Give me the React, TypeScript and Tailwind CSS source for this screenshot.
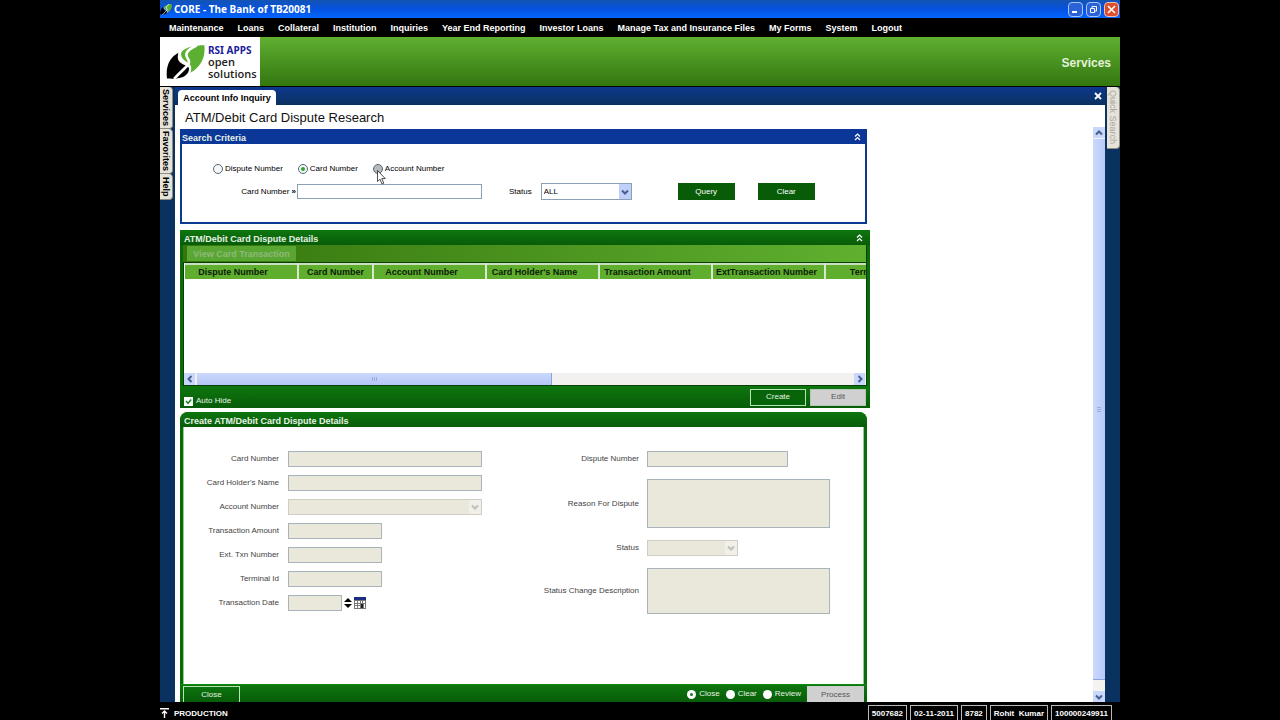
import type { ReactNode } from "react";

const menuItems = [
    "Maintenance",
    "Loans",
    "Collateral",
    "Institution",
    "Inquiries",
    "Year End Reporting",
    "Investor Loans",
    "Manage Tax and Insurance Files",
    "My Forms",
    "System",
    "Logout",
];

const columns = [
    { name: "Dispute Number", className: "w-[113px] pr-4" },
    { name: "Card Number", className: "w-[75px]" },
    { name: "Account Number", className: "w-[113px] pr-4" },
    { name: "Card Holder's Name", className: "w-[113px] pr-4" },
    { name: "Transaction Amount", className: "w-[113px] pr-4" },
    { name: "ExtTransaction Number", className: "w-[113px] pr-1" },
    { name: "Terminal Id", className: "w-[113px] pr-4" },
];

const statusCells = ["5007682", "02-11-2011", "8782", "Rohit  Kumar", "100000249911"];

function LogoMark({ className }: { className: string }) {
    return <svg viewBox="0 0 116 100" className={className} aria-hidden="true">
        <path d="M46 20C58 6 85 0 114 0C118 32 106 64 72 82C78 68 76 58 62 50C48 42 42 32 46 20Z" fill="#5cb031" />
        <path d="M38 22C12 36 -2 62 3 99C34 101 62 98 70 72C68 62 60 62 50 57C36 50 31 38 38 22Z" fill="#000" />
        <path d="M92 0C62 14 54 26 66 42C76 56 54 68 24 100" fill="none" stroke="#fff" strokeWidth="8" />
        <path d="M40 22C34 42 46 50 58 55C70 60 74 64 70 80" fill="none" stroke="#fff" strokeWidth="6" />
    </svg>
}

function Chevron({ className }: { className: string }) {
    return <svg viewBox="0 0 8 8" className={className} fill="none" stroke="currentColor" strokeWidth="2" aria-hidden="true">
        <path d="M1 2.5L4 5.5L7 2.5" />
    </svg>
}

function CollapseIcon() {
    return <svg viewBox="0 0 7 8" className="h-2 w-[7px]" fill="none" stroke="#fff" strokeWidth="1.2" aria-hidden="true">
        <path d="M1 3.5L3.5 1L6 3.5M1 7L3.5 4.5L6 7" />
    </svg>
}

function SideTab({ children, className }: { children: ReactNode, className: string }) {
    return <button className={`w-full flex items-center justify-center rounded-r-sm border-b border-r border-[#8e8c80] bg-[#e6e4da] text-[9px] [writing-mode:vertical-rl] ${className}`}>
        {children}
    </button>
}

function PanelHeader({ title, className, collapsible }: { title: string, className: string, collapsible?: boolean }) {
    return <div className={`flex h-[15px] shrink-0 items-center justify-between pt-0.5 text-[9px] font-bold text-[#e6f2e6] ${className}`}>
        <h2>{title}</h2>
        {collapsible && <button aria-label="Collapse" className="pb-0.5"><CollapseIcon /></button>}
    </div>
}

function SearchRadio({ label, checked, hovered }: { label: string, checked?: boolean, hovered?: boolean }) {
    return <label className="relative flex items-center gap-[2px]">
        <input
            type="radio"
            name="searchBy"
            defaultChecked={checked}
            className={`peer size-[10px] appearance-none rounded-full border border-[#4f6a80] ${hovered ? "bg-[#b9b9b9]" : "bg-[#f6f6f4]"}`}
        />
        <span className="pointer-events-none absolute left-[3px] hidden size-1 rounded-full bg-[#2ea52e] peer-checked:block" />
        {label}
        {hovered && (
            <svg viewBox="0 0 9 15" className="pointer-events-none absolute left-1 top-1.5 h-[15px] w-[9px]" aria-hidden="true">
                <path d="M.5 .5V11.5L3 9.2L5 14L6.8 13.2L4.8 8.6H8.3Z" fill="#fff" stroke="#222" strokeWidth=".8" />
            </svg>
        )}
    </label>
}

function AfterRadio({ label, checked }: { label: string, checked?: boolean }) {
    return <label className="relative flex items-center gap-[3px]">
        <input type="radio" name="afterProcess" defaultChecked={checked} className="peer size-[9px] appearance-none rounded-full bg-white" />
        <span className="pointer-events-none absolute left-[3px] hidden size-[3px] rounded-full bg-[#1d7a1d] peer-checked:block" />
        {label}
    </label>
}

function Field({ id, label, children }: { id: string, label: string, children: ReactNode }) {
    return <>
        <label htmlFor={id} className="text-right">{label}</label>
        <div className="flex items-center">{children}</div>
    </>
}

function TextField({ id, label, className }: { id: string, label: string, className: string }) {
    return <Field id={id} label={label}>
        <input id={id} disabled className={`h-4 border border-[#a9b3ba] bg-[#eae7db] ${className}`} />
    </Field>
}

function SelectField({ id, label, className }: { id: string, label: string, className: string }) {
    return <Field id={id} label={label}>
        <div className={`relative ${className}`}>
            <select id={id} disabled className="block h-4 w-full appearance-none border border-[#d0cec4] bg-[#eae7db] opacity-100" />
            <span className="pointer-events-none absolute inset-y-px right-px flex w-3 items-center justify-center bg-[#f0efea]">
                <Chevron className="size-2 text-[#c2c0b6]" />
            </span>
        </div>
    </Field>
}

function AreaField({ id, label, className }: { id: string, label: string, className: string }) {
    return <Field id={id} label={label}>
        <textarea id={id} disabled className={`block w-[183px] resize-none border border-[#a9b3ba] bg-[#eae7db] ${className}`} />
    </Field>
}

function SearchPanel() {
    return <section className="border-2 border-t-0 border-[#0c3990] bg-white">
        <PanelHeader title="Search Criteria" className="bg-[#0b3799] pr-1" collapsible />
        <div className="h-[78px] pt-5">
            <div className="ml-[31px] flex h-[10px] gap-[15px]">
                <SearchRadio label="Dispute Number" />
                <SearchRadio label="Card Number" checked />
                <SearchRadio label="Account Number" hovered />
            </div>
            <div className="mt-[9px] flex items-center">
                <label htmlFor="cardNumber" className="w-[115px] pr-px text-right">Card Number <b>»</b></label>
                <input id="cardNumber" className="h-[15px] w-[185px] border border-[#8aa0b4] bg-white px-1" />
                <label htmlFor="status" className="ml-[27px]">Status</label>
                <div className="relative ml-[9px] w-[91px]">
                    <select id="status" className="block h-[17px] w-full appearance-none border border-[#8aa0b4] bg-white pl-0.5">
                        <option>ALL</option>
                    </select>
                    <span className="pointer-events-none absolute inset-y-px right-px flex w-3 items-center justify-center bg-[#c0d0f8]">
                        <Chevron className="size-2 text-[#44608f]" />
                    </span>
                </div>
                <button className="ml-[46px] h-[17px] w-[57px] bg-[#085c08] text-white">Query</button>
                <button className="ml-[23px] h-[17px] w-[57px] bg-[#085c08] text-white">Clear</button>
            </div>
        </div>
    </section>
}

function DetailsPanel() {
    return <section className="-mr-[3px] mt-1.5 bg-[#0b6b0b]">
        <PanelHeader title="ATM/Debit Card Dispute Details" className="bg-linear-to-b from-[#0e760e] to-[#085c08] pl-1 pr-[7px]" collapsible />
        <div className="mx-[3px] border-r border-[#064006]">
            <div className="flex h-[17px] items-center bg-linear-to-r from-[#35750c] to-[#60b02f] pl-1">
                <button disabled className="h-[15px] w-[109px] bg-[#5aa632] text-[9px] font-bold text-[#8fb87c]">View Card Transaction</button>
            </div>
            <div className="overflow-hidden border-y border-l border-[#064006] bg-white">
                <div className="h-[110px] overflow-hidden border-l border-white">
                    <table className="w-[753px] table-fixed border-t-2 border-[#c9dfbd] text-[9px]">
                        <thead>
                            <tr className="h-[15px] bg-[#5fae2e] text-[#0c1c08]">
                                {columns.map((column) => (
                                    <th key={column.name} className={`border-r-2 border-[#d7e8cc] p-0 text-center ${column.className}`}>{column.name}</th>
                                ))}
                            </tr>
                        </thead>
                        <tbody />
                    </table>
                </div>
                <div className="flex h-3 items-center bg-[#f2f1ef]">
                    <button aria-label="Scroll left" className="flex h-full w-[11px] items-center justify-center bg-[#c9d7fa]">
                        <Chevron className="size-2 rotate-90 text-[#44608f]" />
                    </button>
                    <div className="ml-0.5 flex h-full w-[355px] items-center justify-center gap-px border-r border-[#8ca4dc] bg-linear-to-b from-[#ccd9fc] to-[#b4c6f5]">
                        <span className="h-1 w-px bg-[#96abdf]" />
                        <span className="h-1 w-px bg-[#96abdf]" />
                        <span className="h-1 w-px bg-[#96abdf]" />
                    </div>
                    <button aria-label="Scroll right" className="ml-auto mr-px flex h-full w-[11px] items-center justify-center bg-[#c9d7fa]">
                        <Chevron className="size-2 -rotate-90 text-[#44608f]" />
                    </button>
                </div>
            </div>
        </div>
        <div className="flex h-[22px] items-center gap-1 bg-linear-to-b from-[#0e760e] to-[#085c08] px-1 text-[#e6f2e6]">
            <label className="relative mt-2 flex items-center gap-[3px]">
                <input type="checkbox" defaultChecked className="peer size-[9px] appearance-none bg-white" />
                <svg viewBox="0 0 9 9" className="pointer-events-none absolute left-0 hidden size-[9px] peer-checked:block" aria-hidden="true">
                    <path d="M2 4L4 6.2L7.2 2.4" fill="none" stroke="#1d8a1d" strokeWidth="1.6" />
                </svg>
                Auto Hide
            </label>
            <button className="ml-auto h-[17px] w-[56px] border border-[#b4e6b4] bg-[#086408]">Create</button>
            <button disabled className="h-[17px] w-[56px] border border-[#b4c8b4] bg-[#d0d0d0] text-[#555]">Edit</button>
        </div>
    </section>
}

function CreatePanel() {
    return <section className="mt-1 flex min-h-0 flex-1 flex-col overflow-hidden rounded-t-lg bg-[#0b6b0b]">
        <PanelHeader title="Create ATM/Debit Card Dispute Details" className="bg-linear-to-b from-[#0e760e] to-[#085c08] px-1" />
        <div className="mx-[3px] flex min-h-0 flex-1 items-start border-x border-[#8fd08f] bg-white pt-6 text-[#444]">
            <div className="grid w-[298px] shrink-0 grid-cols-[95px_1fr] items-center gap-x-[9px] gap-y-2">
                <TextField id="createCard" label="Card Number" className="w-full" />
                <TextField id="createHolder" label="Card Holder's Name" className="w-full" />
                <SelectField id="createAccount" label="Account Number" className="w-full" />
                <TextField id="createAmount" label="Transaction Amount" className="w-[94px]" />
                <TextField id="createTxn" label="Ext. Txn Number" className="w-[94px]" />
                <TextField id="createTerminal" label="Terminal Id" className="w-[94px]" />
                <Field id="createDate" label="Transaction Date">
                    <input id="createDate" disabled className="h-4 w-[54px] border border-[#a9b3ba] bg-[#eae7db]" />
                    <svg viewBox="0 0 8 10" className="ml-0.5 h-[10px] w-2" aria-hidden="true">
                        <path d="M0 4L4 0L8 4ZM0 6L4 10L8 6Z" fill="#000" />
                    </svg>
                    <button aria-label="Pick date" className="ml-0.5">
                        <svg viewBox="0 0 12 12" className="size-3" aria-hidden="true">
                            <rect width="12" height="12" fill="#777" />
                            <rect width="12" height="3" fill="#1c2c80" />
                            <path d="M1 4h2v2H1zM4 4h2v2H4zM7 4h1v2H7zM9 4h2v2H9zM1 7h2v1H1zM4 7h2v1H4zM1 9h2v2H1zM4 9h2v2H4zM10 7h1v4h-1z" fill="#fff" />
                            <path d="M7 7h2v4H7z" fill="#222" />
                        </svg>
                    </button>
                </Field>
            </div>
            <div className="grid flex-1 grid-cols-[157px_1fr] items-center gap-x-2 gap-y-3">
                <TextField id="createDispute" label="Dispute Number" className="w-[141px]" />
                <AreaField id="createReason" label="Reason For Dispute" className="h-[49px]" />
                <SelectField id="createStatus" label="Status" className="w-[91px]" />
                <AreaField id="createDescription" label="Status Change Description" className="h-[46px]" />
            </div>
        </div>
        <div className="flex h-[18px] shrink-0 items-start gap-[6px] overflow-hidden border-t border-[#0e8a0e] bg-linear-to-b from-[#0e760e] to-[#085c08] px-[3px] pt-px text-[#e6f2e6]">
            <button className="mr-auto h-[17px] w-[57px] border border-b-0 border-[#b4e6b4]">Close</button>
            <div className="flex h-4 items-center gap-[6px]">
                <AfterRadio label="Close" checked />
                <AfterRadio label="Clear" />
                <AfterRadio label="Review" />
            </div>
            <button disabled className="h-[17px] w-[57px] bg-[#d0d0d0] text-[#555]">Process</button>
        </div>
    </section>
}

export default function App() {
    return <div className="h-screen bg-black">
        <div className="mx-auto flex h-full w-3/4 flex-col overflow-hidden font-['Liberation_Sans',sans-serif] text-[8px] leading-[10px]">
            <div className="flex h-[18px] shrink-0 items-center bg-linear-to-b from-[#1353b4] via-[#0552e0] to-[#0366ff] pr-px">
                <LogoMark className="h-[11px] w-3" />
                <h1 className="ml-0.5 font-['Noto_Sans',sans-serif] text-[10px] font-bold text-white">CORE - The Bank of TB20081</h1>
                <div className="ml-auto flex gap-[3px]">
                    <button aria-label="Minimize" className="flex size-[15px] items-end rounded-sm border border-[#a9c4f5] bg-[#2c62d8] p-[3px]">
                        <span className="h-0.5 w-[5px] bg-white" />
                    </button>
                    <button aria-label="Restore" className="flex size-[15px] items-center justify-center rounded-sm border border-[#a9c4f5] bg-[#2c62d8]">
                        <svg viewBox="0 0 9 9" className="size-[9px]" fill="none" stroke="#fff" aria-hidden="true">
                            <path d="M3 3V1.5H7.5V6H6M1.5 3.5H5.5V7.5H1.5Z" />
                        </svg>
                    </button>
                    <button aria-label="Close window" className="flex size-[15px] items-center justify-center rounded-sm border border-[#f0c0b0] bg-[#dc4f2c]">
                        <svg viewBox="0 0 9 9" className="size-[9px]" stroke="#fff" strokeWidth="1.6" aria-hidden="true">
                            <path d="M1 1L8 8M8 1L1 8" />
                        </svg>
                    </button>
                </div>
            </div>

            <nav className="flex h-[19px] shrink-0 items-center gap-[14px] whitespace-nowrap pl-[9px] text-[9px] font-bold text-white">
                {menuItems.map((item) => <a key={item} href="#">{item}</a>)}
            </nav>

            <header className="flex h-[49px] shrink-0 items-center justify-between bg-linear-to-b from-[#60b031] to-[#33760f] pr-[9px]">
                <div className="flex h-full w-[100px] items-center gap-[3px] bg-white pl-[6px]">
                    <LogoMark className="h-[34px] w-[39px]" />
                    <div className="font-['Open_Sans',sans-serif] text-[11px] font-semibold leading-[12px] text-[#222]">
                        <p className="font-['Noto_Sans',sans-serif] text-[10px] font-bold text-[#1c1c9c]">RSI APPS</p>
                        <p>open</p>
                        <p>solutions</p>
                    </div>
                </div>
                <p className="pt-0.5 text-[12px] font-bold text-[#e4f2da]">Services</p>
            </header>

            <div className="mt-px flex min-h-0 flex-1 bg-[#0a3260]">
                <aside className="w-[15px] shrink-0 pr-0.5 font-bold">
                    <SideTab className="h-[42px]">Services</SideTab>
                    <SideTab className="h-[45px]">Favorites</SideTab>
                    <SideTab className="h-[26px]">Help</SideTab>
                </aside>

                <main className="flex min-w-0 flex-1 flex-col bg-white">
                    <div className="flex h-[18px] shrink-0 items-end justify-between bg-linear-to-b from-[#0d388c] to-[#0b3160] pl-[3px] pr-[3px]">
                        <button className="h-[15px] w-[98px] rounded-t-sm bg-white text-[9px] font-bold">Account Info Inquiry</button>
                        <button aria-label="Close tab" className="mb-[5px]">
                            <svg viewBox="0 0 8 8" className="size-2" stroke="#fff" strokeWidth="1.8" aria-hidden="true">
                                <path d="M1 1L7 7M7 1L1 7" />
                            </svg>
                        </button>
                    </div>
                    <div className="flex min-h-0 flex-1">
                        <div className="min-w-0 flex-1 pr-0.5">
                            <div className="ml-[5px] flex h-full w-3/4 flex-col">
                                <h1 className="flex h-6 shrink-0 items-center pl-[5px] pt-0.5 text-[13px] text-[#111]">ATM/Debit Card Dispute Research</h1>
                                <SearchPanel />
                                <DetailsPanel />
                                <CreatePanel />
                            </div>
                        </div>
                        <div className="mt-[22px] flex w-3 shrink-0 flex-col bg-[#f4f3f0]">
                            <button aria-label="Scroll up" className="flex h-[11px] items-center justify-center bg-[#c9d7fa]">
                                <Chevron className="size-2 rotate-180 text-[#44608f]" />
                            </button>
                            <div className="my-px flex flex-1 flex-col items-center justify-center gap-px border-b border-[#8ca4dc] bg-linear-to-r from-[#ccd9fc] to-[#b8c9f8]">
                                <span className="h-px w-1 bg-[#96abdf]" />
                                <span className="h-px w-1 bg-[#96abdf]" />
                                <span className="h-px w-1 bg-[#96abdf]" />
                            </div>
                            <button aria-label="Scroll down" className="mt-[10px] flex h-[11px] items-center justify-center bg-[#c9d7fa]">
                                <Chevron className="size-2 text-[#44608f]" />
                            </button>
                        </div>
                    </div>
                </main>

                <aside className="w-[15px] shrink-0 pl-0.5">
                    <SideTab className="h-[62px] text-[#a8a69c]">Quick Search</SideTab>
                </aside>
            </div>

            <footer className="flex h-[18px] shrink-0 items-end font-bold text-white">
                <svg viewBox="0 0 9 10" className="mb-0.5 h-[10px] w-[9px]" fill="none" stroke="#fff" strokeWidth="1.4" aria-hidden="true">
                    <path d="M0 .8H9M4.5 10V3M2 5.5L4.5 3L7 5.5" />
                </svg>
                <span className="mb-px ml-[5px]">PRODUCTION</span>
                <div className="ml-auto mr-2 flex gap-[3px]">
                    {statusCells.map((cell) => (
                        <span key={cell} className="h-[15px] whitespace-pre border border-b-0 border-[#b8b8b8] px-[3px] pt-[3px]">{cell}</span>
                    ))}
                </div>
            </footer>
        </div>
    </div>
}
